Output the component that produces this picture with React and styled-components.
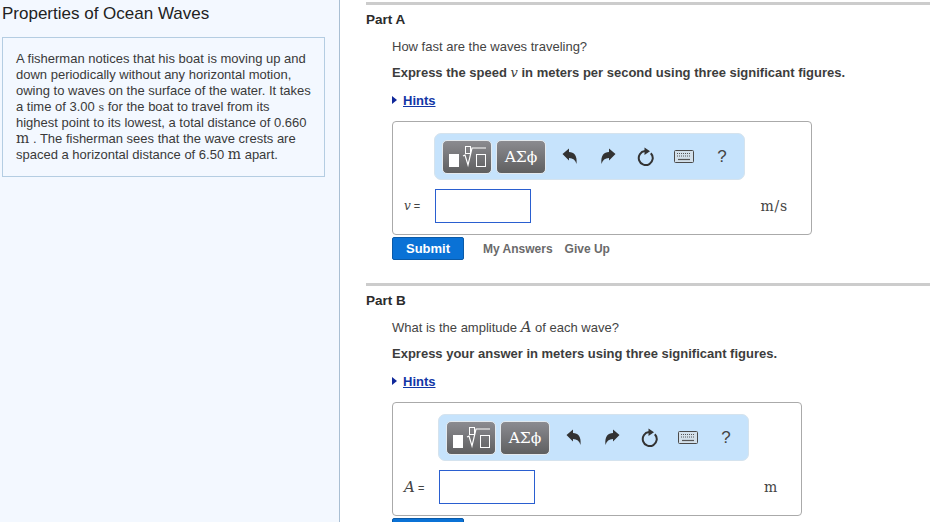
import React from 'react'
import styled, { createGlobalStyle } from 'styled-components'

const Global = createGlobalStyle`
  html, body {
    margin: 0;
    padding: 0;
    background: #fff;
    overflow: hidden;
  }
  * {
    box-sizing: border-box;
  }
`

const Page = styled.div`
  display: grid;
  grid-template-columns: 340px 1fr;
  width: 930px;
  height: 522px;
  overflow: hidden;
  font-family: "Liberation Sans", Arial, sans-serif;
  color: #333;
`

const Sidebar = styled.aside`
  background: #f3f8ff;
  border-right: 1px solid #a9bfd3;
  padding: 4px 14px 0 2px;
`

const Title = styled.h1`
  margin: 0;
  font-size: 17px;
  line-height: 20px;
  font-weight: 400;
  color: #222;
`

const Intro = styled.div`
  margin-top: 13px;
  height: 140px;
  padding: 13px 13px 0 13px;
  border: 1px solid #b4cde2;
  font-size: 13px;
  line-height: 16px;
  color: #3a3a3a;
`

const Main = styled.main`
  padding: 2px 0 0 26px;
`

const Part = styled.section`
  border-top: 3px solid #ccc;
  margin-bottom: 23px;
`

const PartTitle = styled.h2`
  margin: 7px 0 0;
  font-size: 13.5px;
  line-height: 16px;
  font-weight: 700;
  color: #2b2b2b;
`

const Body = styled.div`
  padding-left: 26px;
`

const Question = styled.p`
  margin: 11px 0 0;
  font-size: 13px;
  line-height: 16px;
  color: #444;
`

const Instruction = styled.p`
  margin: 10px 0 0;
  font-size: 13px;
  line-height: 16px;
  font-weight: 700;
  color: #3d3d3d;
`

const MathVar = styled.span`
  font-family: "DejaVu Serif", "Liberation Serif", serif;
  font-style: ${p => (p.$italic ? 'italic' : 'normal')};
  font-weight: 400;
  font-size: ${p => p.$size || 13}px;
  line-height: 1;
`

const HintRow = styled.div`
  display: flex;
  align-items: center;
  gap: 6px;
  margin-top: 11px;
  height: 16px;
`

const Caret = styled.span`
  width: 0;
  height: 0;
  border-left: 5px solid #10289a;
  border-top: 4px solid transparent;
  border-bottom: 4px solid transparent;
`

const HintLink = styled.a`
  color: #1236a6;
  font-size: 13px;
  font-weight: 700;
  text-decoration: underline;
`

const AnswerBox = styled.div`
  width: ${p => p.$width}px;
  height: 114px;
  margin-top: 13px;
  padding: 11px 23px 0 ${p => p.$indent - 2}px;
  border: 1px solid #aaa;
  border-radius: 4px;
`

const Toolbar = styled.div`
  display: flex;
  align-items: center;
  width: 311px;
  height: 47px;
  padding: 0 7px;
  background: #c6e3fc;
  border: 1px solid #d5e3ee;
  border-radius: 7px;
`

const TemplateButton = styled.div`
  display: flex;
  flex: none;
  align-items: center;
  justify-content: center;
  width: 50px;
  height: 34px;
  margin-right: 4px;
  color: #fff;
  background: linear-gradient(#8b8b90, #5f5f60);
  border: 1px solid #e3e9ee;
  border-radius: 5px;
  font-family: "DejaVu Serif", "Liberation Serif", serif;
  font-size: 15.5px;
`

const ToolIcons = styled.div`
  display: grid;
  flex: none;
  grid-template-columns: repeat(5, 38px);
  margin-left: 1px;
  justify-items: center;
  align-items: center;
  color: #3a3a3a;
`

const Help = styled.span`
  font-size: 17px;
  line-height: 20px;
  color: #444;
`

const InputRow = styled.div`
  display: flex;
  align-items: center;
  margin-top: 9px;
  margin-left: ${p => 13 - p.$indent}px;
`

const Label = styled.span`
  width: ${p => p.$indent - 12}px;
  font-size: 11px;
  color: #444;
`

const Field = styled.div`
  width: 96px;
  height: 34px;
  background: #fff;
  border: 1px solid #2a5fd0;
`

const Unit = styled.span`
  margin-left: auto;
  font-family: "DejaVu Serif", "Liberation Serif", serif;
  font-size: 14px;
  letter-spacing: 0.8px;
  color: #444;
`

const Actions = styled.div`
  display: flex;
  align-items: center;
  margin-top: 2px;
`

const SubmitButton = styled.button`
  width: 72px;
  height: 23px;
  padding: 0;
  color: #fff;
  background: #0a72d6;
  border: 1px solid #0a5aa8;
  border-radius: 2px;
  font: 700 13px "Liberation Sans", Arial, sans-serif;
`

const TextAction = styled.a`
  margin-left: ${p => p.$gap}px;
  color: #6a6a6a;
  font-size: 12px;
  font-weight: 700;
`

const RadicalIcon = () => (
  <svg width="44" height="28" viewBox="0 0 44 28" fill="none">
    <rect x="4" y="11" width="10" height="13" fill="#fff" />
    <rect x="20.5" y="3.5" width="5" height="7" stroke="#fff" />
    <path d="M18 13l2-1 3 10 4-17h14" stroke="#fff" strokeWidth="1.2" />
    <rect x="31.5" y="11.5" width="9" height="12" stroke="#fff" />
  </svg>
)

const UndoIcon = () => (
  <svg width="16" height="17" viewBox="0 0 16 17">
    <path d="M0.5 6L7 0.5V4C12 4 15.5 7.5 14.5 16C13.5 12 11 10 7 10V12.5Z" fill="#333" />
  </svg>
)

const RedoIcon = () => (
  <svg width="16" height="17" viewBox="0 0 16 17">
    <path d="M15.5 6L9 0.5V4C4 4 0.5 7.5 1.5 16C2.5 12 5 10 9 10V12.5Z" fill="#333" />
  </svg>
)

const RefreshIcon = () => (
  <svg width="18" height="20" viewBox="0 0 18 20" fill="none">
    <path d="M13.8 6.2A7 7 0 1 1 8 4.1" stroke="#333" strokeWidth="2" />
    <path d="M7.5 0.5L13 4.2L7.5 8Z" fill="#333" />
  </svg>
)

const KeyboardIcon = () => (
  <svg width="20" height="13" viewBox="0 0 20 13" fill="none">
    <rect x="0.5" y="0.5" width="19" height="12" rx="1" fill="#d3e0ea" stroke="#4a4a4a" />
    <path d="M3 3.5h14M3 6h14" stroke="#555" strokeWidth="1.2" strokeDasharray="1 1" />
    <path d="M4 9.5h12" stroke="#555" strokeWidth="1.2" />
  </svg>
)

const AnswerPart = ({ title, question, instruction, label, unit, width, indent }) => (
  <Part>
    <PartTitle>{title}</PartTitle>
    <Body>
      <Question>{question}</Question>
      <Instruction>{instruction}</Instruction>
      <HintRow>
        <Caret />
        <HintLink>Hints</HintLink>
      </HintRow>
      <AnswerBox $width={width} $indent={indent}>
        <Toolbar>
          <TemplateButton>
            <RadicalIcon />
          </TemplateButton>
          <TemplateButton>ΑΣϕ</TemplateButton>
          <ToolIcons>
            <UndoIcon />
            <RedoIcon />
            <RefreshIcon />
            <KeyboardIcon />
            <Help>?</Help>
          </ToolIcons>
        </Toolbar>
        <InputRow $indent={indent}>
          <Label $indent={indent}>{label}</Label>
          <Field />
          <Unit>{unit}</Unit>
        </InputRow>
      </AnswerBox>
      <Actions>
        <SubmitButton>Submit</SubmitButton>
        <TextAction $gap={19}>My Answers</TextAction>
        <TextAction $gap={12}>Give Up</TextAction>
      </Actions>
    </Body>
  </Part>
)

export default function App() {
  return (
    <Page>
      <Global />
      <Sidebar>
        <Title>Properties of Ocean Waves</Title>
        <Intro>
          A fisherman notices that his boat is moving up and down periodically without any
          horizontal motion, owing to waves on the surface of the water. It takes a time of 3.00{' '}
          <MathVar $size={11}>s</MathVar> for the boat to travel from its highest point to its
          lowest, a total distance of 0.660 <MathVar $size={14}>m</MathVar> . The fisherman sees
          that the wave crests are spaced a horizontal distance of 6.50{' '}
          <MathVar $size={14}>m</MathVar> apart.
        </Intro>
      </Sidebar>
      <Main>
        <AnswerPart
          title="Part A"
          question="How fast are the waves traveling?"
          instruction={
            <>
              Express the speed <MathVar $italic>v</MathVar> in meters per second using three
              significant figures.
            </>
          }
          label={
            <>
              <MathVar $italic $size={12}>v</MathVar> =
            </>
          }
          unit="m/s"
          width={420}
          indent={43}
        />
        <AnswerPart
          title="Part B"
          question={
            <>
              What is the amplitude <MathVar $italic $size={15}>A</MathVar> of each wave?
            </>
          }
          instruction="Express your answer in meters using three significant figures."
          label={
            <>
              <MathVar $italic $size={15}>A</MathVar> =
            </>
          }
          unit="m"
          width={410}
          indent={47}
        />
      </Main>
    </Page>
  )
}
